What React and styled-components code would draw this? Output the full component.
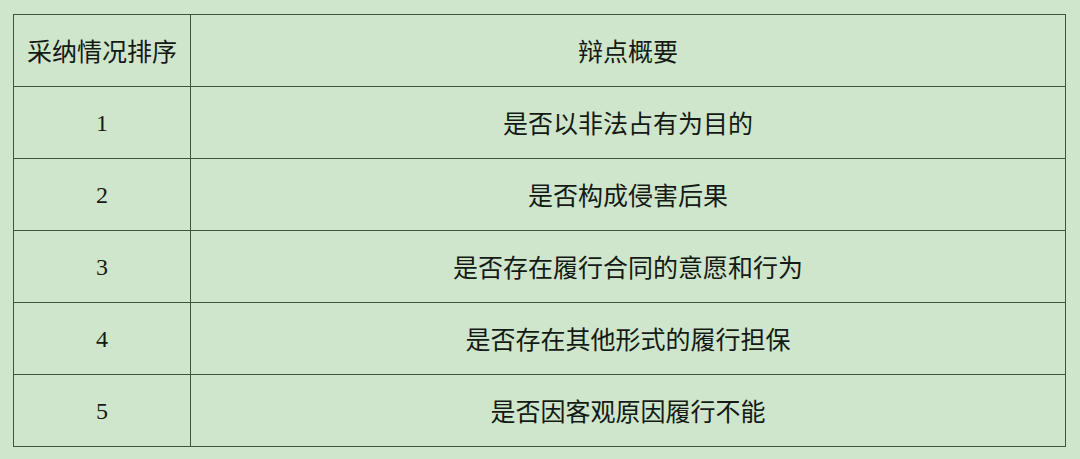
import React from "react";
import styled, { createGlobalStyle } from "styled-components";

const rows = [
  { rank: "1", point: "是否以非法占有为目的" },
  { rank: "2", point: "是否构成侵害后果" },
  { rank: "3", point: "是否存在履行合同的意愿和行为" },
  { rank: "4", point: "是否存在其他形式的履行担保" },
  { rank: "5", point: "是否因客观原因履行不能" },
];

const GlobalStyle = createGlobalStyle`
  html, body {
    margin: 0;
    padding: 0;
    background: #cfe6cc;
  }
`;

const Page = styled.div`
  width: 1080px;
  height: 459px;
  box-sizing: border-box;
  padding: 14px 0 0 13px;
  background: #cfe6cc;
`;

const Table = styled.table`
  width: 1053px;
  height: 432px;
  border-collapse: collapse;
  border: 1.5px solid #1f331d;
  table-layout: fixed;
`;

const Row = styled.tr`
  height: 72px;
`;

const Cell = styled.td`
  border: 1px solid #3d553a;
  padding: 0;
  text-align: center;
  vertical-align: middle;
  color: #141a14;
  font-size: ${({ $num }) => ($num ? "24px" : "25px")};
  font-family: ${({ $num }) =>
    $num
      ? '"Liberation Serif", serif'
      : '"Noto Sans CJK SC", sans-serif'};
  font-weight: 400;
  line-height: 1;
`;

const RankCol = styled.col`
  width: 177px;
`;

export default function App() {
  return (
    <Page>
      <GlobalStyle />
      <Table>
        <colgroup>
          <RankCol />
          <col />
        </colgroup>
        <tbody>
          <Row>
            <Cell>采纳情况排序</Cell>
            <Cell>辩点概要</Cell>
          </Row>
          {rows.map((r) => (
            <Row key={r.rank}>
              <Cell $num>{r.rank}</Cell>
              <Cell>{r.point}</Cell>
            </Row>
          ))}
        </tbody>
      </Table>
    </Page>
  );
}
